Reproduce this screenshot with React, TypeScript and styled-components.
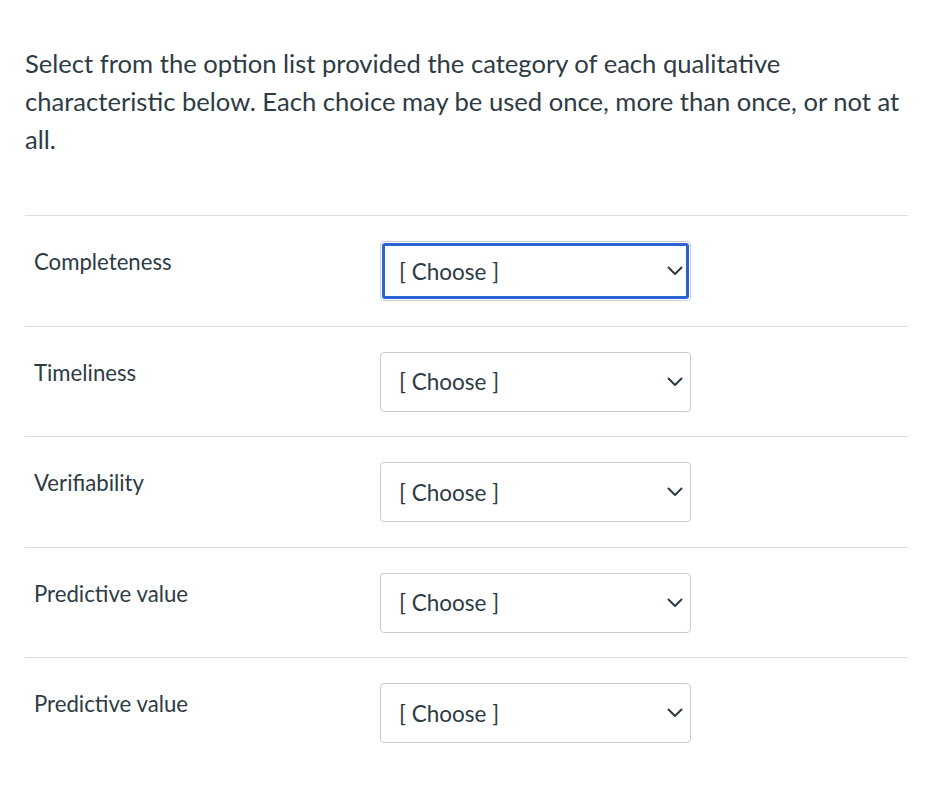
import React from 'react';
import styled, { createGlobalStyle } from 'styled-components';

const GlobalStyle = createGlobalStyle`
  html, body {
    margin: 0;
    padding: 0;
    background: #ffffff;
  }
  body {
    font-family: Lato, "Open Sans", "Liberation Sans", sans-serif;
    color: #2d3b45;
  }
`;

const questions = [
  'Completeness',
  'Timeliness',
  'Verifiability',
  'Predictive value',
  'Predictive value',
];

const App: React.FC = () => {
  return (
    <>
      <GlobalStyle />
      <Page>
        <Prompt>
          Select from the option list provided the category of each qualitative characteristic
          below. Each choice may be used once, more than once, or not at all.
        </Prompt>
        <List>
          {questions.map((q, i) => (
            <Row key={i}>
              <Label>{q}</Label>
              <SelectWrap $focused={i === 0}>
                <Select defaultValue="">
                  <option value="">[ Choose ]</option>
                  <option>Fundamental</option>
                  <option>Enhancing</option>
                </Select>
                <Chevron width="16" height="10" viewBox="0 0 16 10">
                  <path d="M1.5 1.5 L8 8 L14.5 1.5" fill="none" stroke="#2d3b45" strokeWidth="2" strokeLinecap="round" strokeLinejoin="round" />
                </Chevron>
              </SelectWrap>
            </Row>
          ))}
        </List>
      </Page>
    </>
  );
};

export default App;

const Page = styled.div`
  padding: 44px 30px 0 25px;
`;

const Prompt = styled.p`
  margin: 0;
  font-size: 25.6px;
  line-height: 38px;
  max-width: 883px;
`;

const List = styled.div`
  margin-top: 57px;
  width: 883px;
`;

const Row = styled.div`
  display: grid;
  grid-template-columns: 346px 311px;
  align-items: start;
  border-top: 1px solid #dcdfe2;
  padding: 25px 0 24.5px 9px;
`;

const Label = styled.div`
  margin-top: 6px;
  font-size: 22.2px;
  line-height: 30px;
`;

const SelectWrap = styled.div<{ $focused?: boolean }>`
  position: relative;
  height: 60px;
  border: 1px solid #c7cdd1;
  border-radius: 4px;
  box-sizing: border-box;
  background: #fff;

  &::after {
    content: '';
    display: ${p => (p.$focused ? 'block' : 'none')};
    position: absolute;
    inset: 1px;
    border: 3px solid #2c63d2;
    border-radius: 3px;
    pointer-events: none;
  }
`;

const Select = styled.select`
  appearance: none;
  -webkit-appearance: none;
  width: 100%;
  height: 100%;
  border: none;
  outline: none;
  background: transparent;
  padding: 0 40px 0 18px;
  font-family: Lato, "Open Sans", "Liberation Sans", sans-serif;
  font-size: 22.5px;
  color: #2d3b45;
`;

const Chevron = styled.svg`
  position: absolute;
  right: 7px;
  top: 50%;
  transform: translateY(-50%);
  pointer-events: none;
`;
